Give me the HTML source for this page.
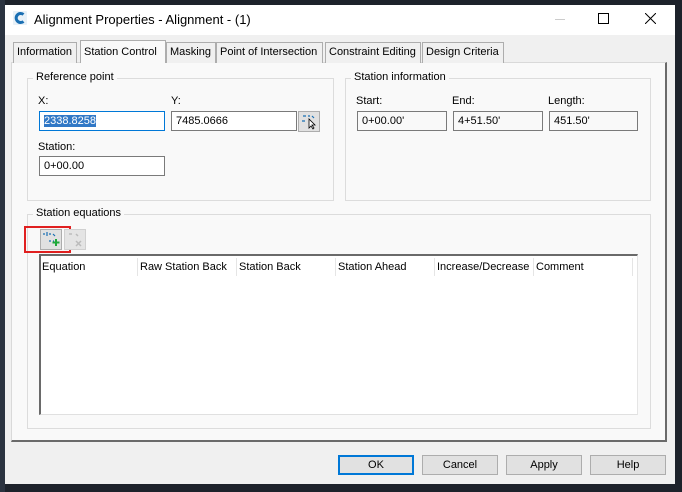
<!DOCTYPE html>
<html><head><style>
*{box-sizing:border-box;margin:0;padding:0}
body{width:682px;height:492px;background:#1d222b;position:relative;overflow:hidden;font-family:"Liberation Sans",sans-serif;font-size:11px;color:#000}
.a{position:absolute}
.win{left:5px;top:5px;width:670px;height:479px;background:#f0f0f0}
.title{left:5px;top:5px;width:670px;height:30px;background:#fff}
.tab{position:absolute;top:42px;height:21px;background:#f0f0f0;border:1px solid #adadad;border-bottom:none;padding:3px 0 0 3px;white-space:nowrap}
.panel{left:11px;top:62px;width:656px;height:380px;background:#f9f9f9;border:1px solid #d9d9d9;border-right:2px solid #6a6a6a;border-bottom:2px solid #6a6a6a}
.grp{position:absolute;border:1px solid #dcdcdc}
.glab{position:absolute;background:#f9f9f9;padding:0 3px;top:-8px;left:5px}
.inp{position:absolute;height:20px;border:1px solid #7a7a7a;background:#fff;padding:3px 0 0 4px}
.ro{background:#f9f9f9}
.btn{position:absolute;top:455px;width:76px;height:20px;border:1px solid #adadad;background:#e1e1e1;text-align:center;padding-top:3px}
.hd{position:absolute;top:258px;height:18px;border-right:1px solid #e5e5e5;padding:3px 0 0 2px;white-space:nowrap}
</style></head><body>
<div class="a" style="left:0;top:0;width:5px;height:492px;background:#2b3340"></div>
<div class="a win"></div>
<div class="a title"></div>
<svg class="a" style="left:13px;top:11px" width="14" height="14" viewBox="0 0 14 14"><rect width="14" height="14" rx="1" fill="#e8f1f8"/><path d="M10.5 3.5A4.5 4.5 0 1 0 10.5 10.5" stroke="#1a6fb3" stroke-width="3" fill="none"/></svg>
<div class="a" style="left:34px;top:12px;font-size:13px">Alignment Properties - Alignment - (1)</div>
<div class="a" style="left:555px;top:19px;width:10px;height:1px;background:#ccc"></div>
<div class="a" style="left:598px;top:13px;width:11px;height:11px;border:1px solid #000"></div>
<svg class="a" style="left:645px;top:13px" width="11" height="11"><path d="M0 0L11 11M11 0L0 11" stroke="#000" stroke-width="1"/></svg>

<div class="a panel"></div>
<div class="tab" style="left:13px;width:64px">Information</div>
<div class="tab" style="left:80px;top:40px;height:23px;width:86px;background:#f9f9f9;padding-top:5px;z-index:2">Station Control</div>
<div class="tab" style="left:166px;width:50px">Masking</div>
<div class="tab" style="left:216px;width:107px">Point of Intersection</div>
<div class="tab" style="left:325px;width:96px">Constraint Editing</div>
<div class="tab" style="left:422px;width:82px">Design Criteria</div>

<div class="grp" style="left:27px;top:78px;width:307px;height:123px"><span class="glab">Reference point</span></div>
<div class="a" style="left:38px;top:95px">X:</div>
<div class="a" style="left:171px;top:95px">Y:</div>
<div class="inp" style="left:39px;top:111px;width:126px;border-color:#0078d7"><span style="background:#3178c6;color:#fff">2338.8258</span></div>
<div class="inp" style="left:171px;top:111px;width:126px">7485.0666</div>
<div class="a" style="left:298px;top:111px;width:22px;height:21px;background:#e1e1e1;border:1px solid #adadad"><svg width="20" height="19"><path d="M4 4h3M9 4h2M13 4l2 2M3 9h3" stroke="#1a6fb3" stroke-width="1.2"/><path d="M10 7v9l2-2 2 3 1-1-2-3h3z" fill="#fff" stroke="#000" stroke-width="0.8"/></svg></div>
<div class="a" style="left:38px;top:141px">Station:</div>
<div class="inp" style="left:39px;top:156px;width:126px">0+00.00</div>

<div class="grp" style="left:345px;top:78px;width:306px;height:123px"><span class="glab">Station information</span></div>
<div class="a" style="left:356px;top:95px">Start:</div>
<div class="a" style="left:452px;top:95px">End:</div>
<div class="a" style="left:548px;top:95px">Length:</div>
<div class="inp ro" style="left:357px;top:111px;width:90px">0+00.00'</div>
<div class="inp ro" style="left:453px;top:111px;width:90px">4+51.50'</div>
<div class="inp ro" style="left:549px;top:111px;width:89px">451.50'</div>

<div class="grp" style="left:27px;top:214px;width:624px;height:215px"><span class="glab">Station equations</span></div>
<div class="a" style="left:24px;top:226px;width:47px;height:27px;border:2px solid #e02020"></div>
<div class="a" style="left:40px;top:229px;width:22px;height:21px;background:#e1e1e1;border:1px solid #adadad"><svg width="20" height="19"><path d="M2 4h2M6 2v4M8 4h2M12 4l2 2M8 11h2M12 11h1" stroke="#1a6fb3" stroke-width="1.2"/><path d="M15 9v7M11.5 12.5h7" stroke="#1fa83a" stroke-width="2"/></svg></div>
<div class="a" style="left:64px;top:229px;width:22px;height:21px;background:#e4e4e4;border:1px solid #d0d0d0"><svg width="20" height="19"><path d="M4 4h3M11 4l2 2M11 11l5 5M16 11l-5 5" stroke="#bbb" stroke-width="1.5"/></svg></div>
<div class="a" style="left:39px;top:254px;width:599px;height:161px;background:#fff;border-top:2px solid #6a6a6a;border-left:2px solid #6a6a6a;border-right:1px solid #e5e5e5;border-bottom:1px solid #e0e0e0"></div>
<div class="hd" style="left:40px;width:98px">Equation</div>
<div class="hd" style="left:138px;width:99px">Raw Station Back</div>
<div class="hd" style="left:237px;width:99px">Station Back</div>
<div class="hd" style="left:336px;width:99px">Station Ahead</div>
<div class="hd" style="left:435px;width:99px">Increase/Decrease</div>
<div class="hd" style="left:534px;width:99px">Comment</div>

<div class="btn" style="left:338px;border:2px solid #0078d7;padding-top:2px">OK</div>
<div class="btn" style="left:422px">Cancel</div>
<div class="btn" style="left:506px">Apply</div>
<div class="btn" style="left:590px">Help</div>
</body></html>
